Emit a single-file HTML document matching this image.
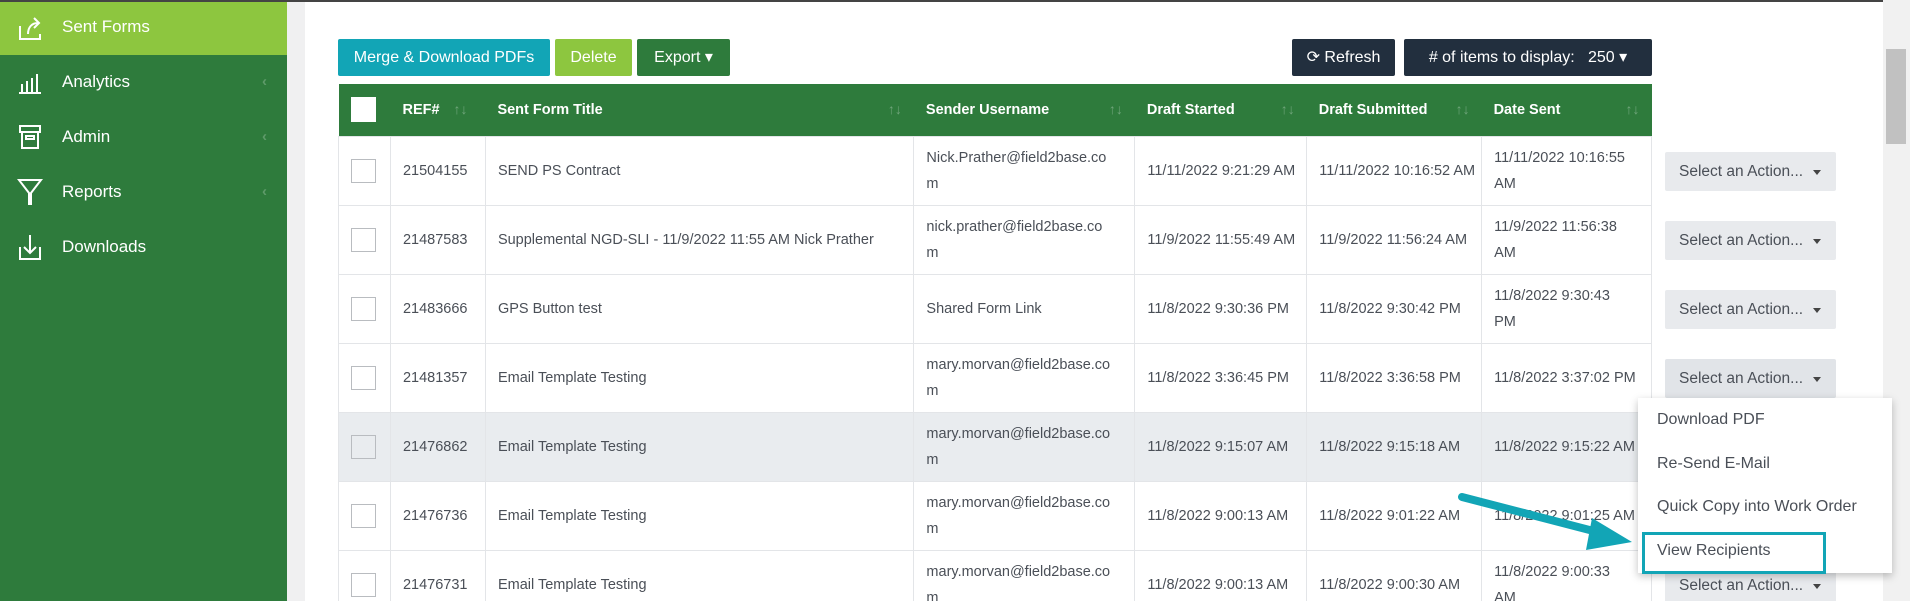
<!DOCTYPE html>
<html style="height:601px;overflow:hidden"><head><meta charset="utf-8"><style>
*{box-sizing:border-box;margin:0;padding:0}
body{width:1910px;height:601px;overflow:hidden;background:#fff;font-family:"Liberation Sans",sans-serif;color:#4a4f57;position:relative}
.abs{position:absolute}
#sb{left:0;top:0;width:287px;height:601px;background:#2e7b3c}
.nav{position:absolute;left:0;width:287px;height:55px;color:#fff;font-size:17px}
.nav span{position:absolute;left:62px;top:17px}
.nav svg{position:absolute;left:17px;top:12px}
.nav .ch{position:absolute;left:262px;top:18px;color:#5f9a6a;font-size:15px}
#gap{left:287px;top:0;width:18px;height:601px;background:#f0f0f1}
#topline{left:0;top:0;width:1910px;height:2px;background:#444}
.btn{position:absolute;top:39px;height:37px;color:#fff;font-size:16px;line-height:37px;text-align:center;border-radius:2px}
table{position:absolute;left:338px;top:84px;width:1314px;border-collapse:collapse;font-size:14.5px}
th{background:#2e7b3c;color:#fff;height:52px;text-align:left;font-weight:bold;padding-left:12px;position:relative}
th i{position:absolute;right:12px;top:17px;font-style:normal;color:#6fa57a;font-size:14px}
td{height:69px;border:1px solid #e3e5e8;padding-left:12px;line-height:26px;vertical-align:middle}
tr.hl td{background:#e9ecef}
.cb{width:25px;height:24px;border:1px solid #b9bcc0;background:#fff;display:inline-block;vertical-align:middle}
.sel{position:absolute;left:1665px;width:171px;height:39px;background:#e8eaed;border-radius:2px;font-size:15.5px;color:#4a4f57;line-height:39px;padding-left:14px}
.sel:after{content:"";position:absolute;right:15px;top:18px;border:4px solid transparent;border-top:5px solid #444}
#menu{left:1638px;top:398px;width:254px;height:175px;background:#fff;box-shadow:0 3px 8px rgba(0,0,0,.25)}
#menu div{position:absolute;left:19px;font-size:16px;color:#4a4f57}
</style></head><body>
<div id="sb" class="abs"></div>
<div class="nav" style="top:0;background:#8dc63f"><svg width="26" height="30" viewBox="0 0 26 30" fill="none" stroke="#fff" stroke-width="2"><path d="M3 14v13h20v-5M11 22c0-7 4-11 10-11M17 6l5 5-5 5"/></svg><span>Sent Forms</span></div>
<div class="nav" style="top:55px"><svg width="26" height="30" viewBox="0 0 26 30" fill="none" stroke="#fff" stroke-width="2"><path d="M2 26h22M5 25v-8M10 25v-11M15 25v-14M20 25v-18"/></svg><span>Analytics</span><b class="ch">‹</b></div>
<div class="nav" style="top:110px"><svg width="26" height="30" viewBox="0 0 26 30" fill="none" stroke="#fff" stroke-width="2"><path d="M3 4h20v6H3zM5 10v16h16V10M9 14h8v3H9z"/></svg><span>Admin</span><b class="ch">‹</b></div>
<div class="nav" style="top:165px"><svg width="26" height="30" viewBox="0 0 26 30" fill="none" stroke="#fff" stroke-width="2"><path d="M2 3h22L14 16v11h-2V16z"/></svg><span>Reports</span><b class="ch">‹</b></div>
<div class="nav" style="top:220px"><svg width="26" height="30" viewBox="0 0 26 30" fill="none" stroke="#fff" stroke-width="2"><path d="M3 15v12h20V15M13 3v18M7 15l6 6 6-6"/></svg><span>Downloads</span></div>
<div id="gap" class="abs"></div>
<div id="topline" class="abs"></div>
<div class="btn" style="left:338px;width:212px;background:#12a5b6">Merge &amp; Download PDFs</div>
<div class="btn" style="left:555px;width:77px;background:#8dc63f">Delete</div>
<div class="btn" style="left:637px;width:93px;background:#2e7b3c">Export ▾</div>
<div class="btn" style="left:1292px;width:103px;background:#222f3e">⟳ Refresh</div>
<div class="btn" style="left:1404px;width:248px;background:#222f3e"># of items to display: &nbsp; 250 ▾</div>
<table>
<tr><th style="width:52px"><span class="cb" style="border:none;width:25px;height:25px"></span></th><th style="width:95px">REF#<i style="right:18px">↑↓</i></th><th style="width:429px">Sent Form Title<i>↑↓</i></th><th style="width:221px">Sender Username<i>↑↓</i></th><th style="width:172px">Draft Started<i>↑↓</i></th><th style="width:175px">Draft Submitted<i>↑↓</i></th><th style="width:170px">Date Sent<i>↑↓</i></th></tr>
<tr><td><span class="cb"></span></td><td>21504155</td><td>SEND PS Contract</td><td>Nick.Prather@field2base.co<br>m</td><td>11/11/2022 9:21:29 AM</td><td>11/11/2022 10:16:52 AM</td><td>11/11/2022 10:16:55<br>AM</td></tr>
<tr><td><span class="cb"></span></td><td>21487583</td><td>Supplemental NGD-SLI - 11/9/2022 11:55 AM Nick Prather</td><td>nick.prather@field2base.co<br>m</td><td>11/9/2022 11:55:49 AM</td><td>11/9/2022 11:56:24 AM</td><td>11/9/2022 11:56:38<br>AM</td></tr>
<tr><td><span class="cb"></span></td><td>21483666</td><td>GPS Button test</td><td>Shared Form Link</td><td>11/8/2022 9:30:36 PM</td><td>11/8/2022 9:30:42 PM</td><td>11/8/2022 9:30:43<br>PM</td></tr>
<tr><td><span class="cb"></span></td><td>21481357</td><td>Email Template Testing</td><td>mary.morvan@field2base.co<br>m</td><td>11/8/2022 3:36:45 PM</td><td>11/8/2022 3:36:58 PM</td><td>11/8/2022 3:37:02 PM</td></tr>
<tr class="hl"><td><span class="cb" style="background:#e9ecef"></span></td><td>21476862</td><td>Email Template Testing</td><td>mary.morvan@field2base.co<br>m</td><td>11/8/2022 9:15:07 AM</td><td>11/8/2022 9:15:18 AM</td><td>11/8/2022 9:15:22 AM</td></tr>
<tr><td><span class="cb"></span></td><td>21476736</td><td>Email Template Testing</td><td>mary.morvan@field2base.co<br>m</td><td>11/8/2022 9:00:13 AM</td><td>11/8/2022 9:01:22 AM</td><td>11/8/2022 9:01:25 AM</td></tr>
<tr><td><span class="cb"></span></td><td>21476731</td><td>Email Template Testing</td><td>mary.morvan@field2base.co<br>m</td><td>11/8/2022 9:00:13 AM</td><td>11/8/2022 9:00:30 AM</td><td>11/8/2022 9:00:33<br>AM</td></tr>
</table>
<div class="sel" style="top:152px">Select an Action...</div>
<div class="sel" style="top:221px">Select an Action...</div>
<div class="sel" style="top:290px">Select an Action...</div>
<div class="sel" style="top:359px;background:#e1e4e8">Select an Action...</div>
<div class="sel" style="top:566px">Select an Action...</div>
<div class="abs" style="left:1883px;top:0;width:27px;height:601px;background:#f1f1f1"></div>
<div class="abs" style="left:1886px;top:49px;width:20px;height:95px;background:#c1c1c1"></div>
<div id="menu" class="abs">
<div style="top:13px">Download PDF</div>
<div style="top:57px">Re-Send E-Mail</div>
<div style="top:100px">Quick Copy into Work Order</div>
<div style="top:144px">View Recipients</div>
</div>
<div class="abs" style="left:1642px;top:532px;width:184px;height:42px;border:3px solid #12a5b6"></div>
<svg class="abs" style="left:0;top:0" width="1910" height="601"><line x1="1462" y1="497" x2="1605" y2="534" stroke="#12a5b6" stroke-width="8" stroke-linecap="round"/><polygon points="1632,542 1592,518 1586,550" fill="#12a5b6"/></svg>
</body></html>
